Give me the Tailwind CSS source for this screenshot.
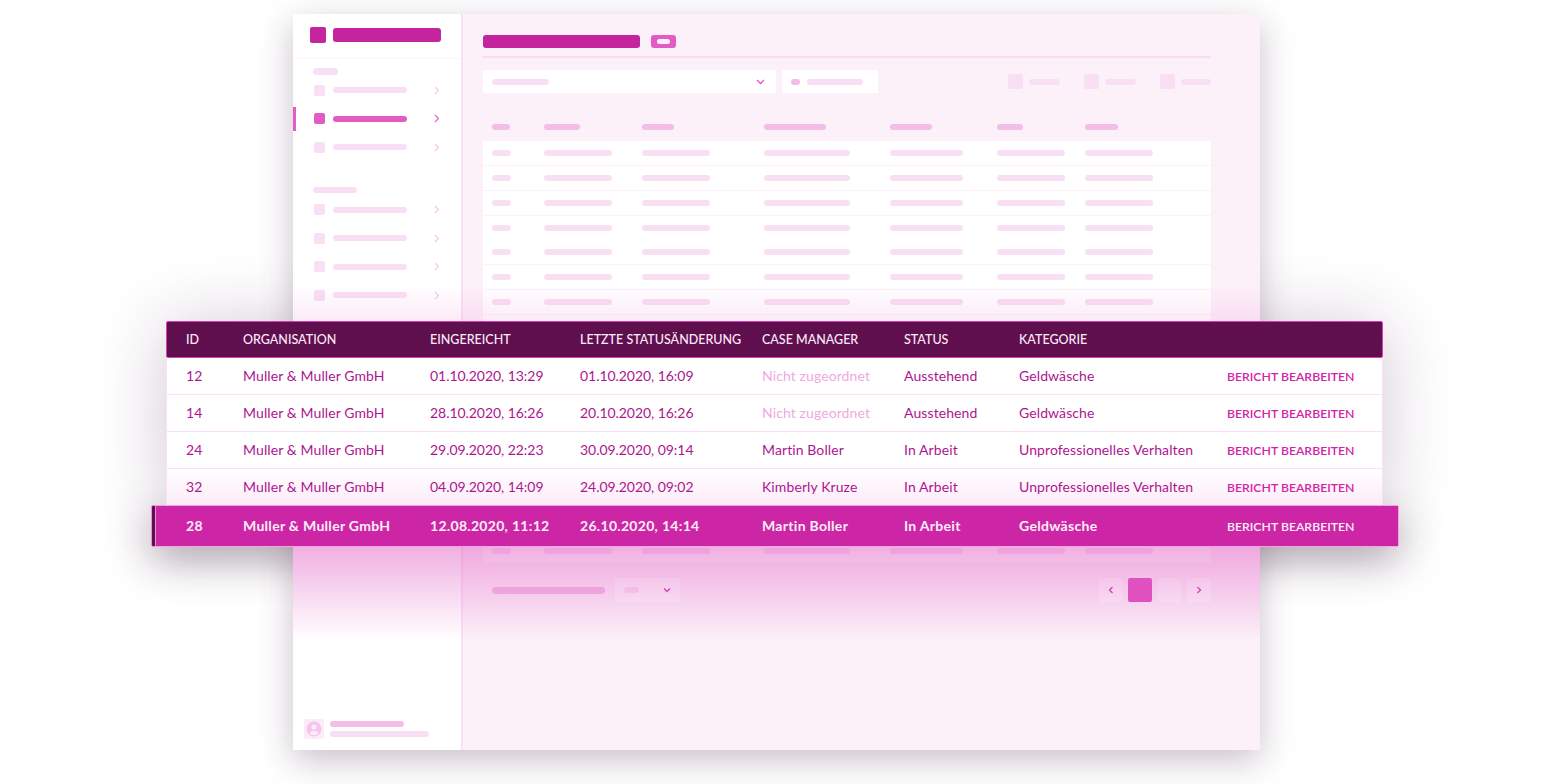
<!DOCTYPE html>
<html lang="de">
<head>
    <meta charset="UTF-8">
    <title>Fallübersicht</title>
    <script src="https://cdn.jsdelivr.net/npm/@tailwindcss/browser@4"></script>
</head>
<body class="bg-white font-['Lato','Open_Sans',sans-serif]">
<div class="relative w-[1549px] h-[784px] overflow-hidden bg-white pt-[14px] pl-[293px]">

    <!-- Shadow of the floating table: only shows outside the window -->
    <div class="absolute left-[166px] top-[321px] w-[1217px] h-[185px] shadow-[0_4px_70px_rgba(60,20,60,0.24)]"></div>
    <div class="absolute left-[151px] top-[506px] w-[1248px] h-[41px] shadow-[0_12px_44px_rgba(50,20,50,0.42)]"></div>

    <!-- App window behind the table -->
    <div class="relative flex w-[967px] h-[736px] bg-white shadow-[0_10px_32px_rgba(60,25,60,0.28)]">

        <!-- Sidebar -->
        <aside class="relative flex flex-col w-[168px] shrink-0 bg-white">
            <div class="flex items-center gap-[7px] h-[45px] pl-[17px] pb-[2px] border-b border-[#fdf4fb]">
                <div class="w-[16px] h-[16px] rounded-[2px] bg-[#c4259d]"></div>
                <div class="w-[108px] h-[14px] rounded-[3px] bg-[#c4259d]"></div>
            </div>
            <div id="nav-one" class="pt-[9px] pl-[20px]">
                <div class="w-[25px] h-[7px] rounded-full bg-[#f9dff4] mb-[1px]"></div>
            </div>
            <div id="nav-two" class="pt-[25px] pl-[20px]">
                <div class="w-[44px] h-[6px] rounded-full bg-[#f9dff4] mb-[3px]"></div>
            </div>
            <div class="absolute left-[11px] top-[705px] flex items-center gap-[6px]">
                <div class="flex items-center justify-center w-[20px] h-[20px] rounded-[2px] bg-[#fcecf9]">
                    <svg width="16" height="16" viewBox="0 0 16 16">
                        <circle cx="8" cy="8" r="7.5" fill="#f6c4ec"/>
                        <circle cx="8" cy="6" r="2.6" fill="#fcecf9"/>
                        <ellipse cx="8" cy="12" rx="4" ry="2" fill="#fcecf9"/>
                    </svg>
                </div>
                <div class="flex flex-col gap-[4px]">
                    <div class="w-[74px] h-[6px] rounded-full bg-[#f4bde8]"></div>
                    <div class="w-[99px] h-[6px] rounded-full bg-[#f9dff4]"></div>
                </div>
            </div>
        </aside>

        <!-- Main area -->
        <main class="w-[799px] bg-[#fcf0f9] border-l-2 border-[#fae0f4] pl-[20px] pr-[49px]">
            <div class="flex items-center gap-[11px] h-[44px] pt-[13px] pb-[1px] border-b-2 border-[#f9dcf3]">
                <div class="w-[157px] h-[13px] rounded-[3px] bg-[#c4259d]"></div>
                <div class="flex items-center justify-center w-[25px] h-[13px] rounded-[3px] bg-[#e25cc4]">
                    <div class="w-[13px] h-[5px] rounded-full bg-[#fdf0fa]"></div>
                </div>
            </div>

            <div class="flex items-start h-[24px] mt-[12px]">
                <div class="flex items-center justify-between w-[293px] h-[23px] bg-white pl-[9px] pr-[11px]">
                    <div class="w-[57px] h-[6px] rounded-full bg-[#f9dff4]"></div>
                    <svg width="9" height="6" viewBox="0 0 9 6" fill="none" stroke="#e25cc4" stroke-width="1.3"><path d="M1 1l3.500 3.500L8 1"/></svg>
                </div>
                <div class="flex items-center gap-[7px] w-[96px] h-[23px] ml-[6px] bg-white pl-[9px]">
                    <div class="w-[9px] h-[6px] rounded-full bg-[#f4bde8]"></div>
                    <div class="w-[56px] h-[6px] rounded-full bg-[#f9dff4]"></div>
                </div>
                <div class="flex items-center gap-[6px] h-[23px] ml-[130px]">
                    <div class="w-[15px] h-[15px] rounded-[2px] bg-[#f9dff4]"></div>
                    <div class="w-[31px] h-[6px] rounded-full bg-[#f9dff4]"></div>
                </div>
                <div class="flex items-center gap-[6px] h-[23px] ml-[24px]">
                    <div class="w-[15px] h-[15px] rounded-[2px] bg-[#f9dff4]"></div>
                    <div class="w-[31px] h-[6px] rounded-full bg-[#f9dff4]"></div>
                </div>
                <div class="flex items-center gap-[6px] h-[23px] ml-[24px]">
                    <div class="w-[15px] h-[15px] rounded-[2px] bg-[#f9dff4]"></div>
                    <div class="w-[30px] h-[6px] rounded-full bg-[#f9dff4]"></div>
                </div>
            </div>

            <!-- Skeleton table -->
            <div class="grid grid-cols-[52px_98px_122px_126px_107px_88px_1fr] items-center h-[47px] pt-[18px] pl-[9px]">
                <div class="w-[18px] h-[6px] rounded-full bg-[#f4bde8]"></div>
                <div class="w-[36px] h-[6px] rounded-full bg-[#f4bde8]"></div>
                <div class="w-[32px] h-[6px] rounded-full bg-[#f4bde8]"></div>
                <div class="w-[62px] h-[6px] rounded-full bg-[#f4bde8]"></div>
                <div class="w-[42px] h-[6px] rounded-full bg-[#f4bde8]"></div>
                <div class="w-[26px] h-[6px] rounded-full bg-[#f4bde8]"></div>
                <div class="w-[33px] h-[6px] rounded-full bg-[#f4bde8]"></div>
            </div>
            <div id="skeleton-rows" class="grid auto-rows-[24.85px]"></div>

            <!-- Pagination -->
            <div class="flex items-center h-[24px] mt-[15px] pl-[9px]">
                <div class="w-[113px] h-[7px] rounded-full bg-[#f4bde8]"></div>
                <div class="flex items-center justify-between w-[65px] h-[24px] ml-[10px] bg-white/60 pl-[9px] pr-[9px]">
                    <div class="w-[15px] h-[6px] rounded-full bg-[#f9dff4]"></div>
                    <svg width="8" height="6" viewBox="0 0 8 6" fill="none" stroke="#d42fae" stroke-width="1.3"><path d="M1 1.500l3 3 3-3"/></svg>
                </div>
                <div class="flex items-center justify-center w-[23px] h-[24px] ml-auto bg-white/60 rounded-[2px]">
                    <svg width="6" height="8" viewBox="0 0 6 8" fill="none" stroke="#d42fae" stroke-width="1.3"><path d="M4.500 1l-3 3 3 3"/></svg>
                </div>
                <div class="w-[24px] h-[24px] ml-[6px] bg-[#df4dbd] rounded-[2px]"></div>
                <div class="w-[23px] h-[24px] ml-[6px] bg-white/60 rounded-[2px]"></div>
                <div class="flex items-center justify-center w-[24px] h-[24px] ml-[6px] bg-white/60 rounded-[2px]">
                    <svg width="6" height="8" viewBox="0 0 6 8" fill="none" stroke="#d42fae" stroke-width="1.3"><path d="M1.500 1l3 3-3 3"/></svg>
                </div>
            </div>
        </main>

        <!-- Pink glow laid over the window -->
        <div class="absolute left-0 right-0 top-[271px] h-[355px] bg-[linear-gradient(to_bottom,rgba(226,92,196,0)_0%,rgba(226,92,196,0.12)_10%,rgba(226,92,196,0.5)_73%,rgba(226,92,196,0.28)_85%,rgba(226,92,196,0)_100%)]"></div>
    </div>

    <!-- Highlighted table floating over the window -->
    <div class="absolute left-[151px] top-[321px] w-[1248px]">
        <div class="ml-[15px] w-[1217px]">
            <div class="grid grid-cols-[57px_187px_150px_182px_142px_115px_208px_1fr] items-center h-[37px] px-[19px] pt-[2px] rounded-[2px] bg-[#600f4e] border border-[#d83fb4] text-[12.500px] font-medium text-[#fdeaf9]">
                <div>ID</div>
                <div>ORGANISATION</div>
                <div>EINGEREICHT</div>
                <div>LETZTE STATUSÄNDERUNG</div>
                <div>CASE MANAGER</div>
                <div>STATUS</div>
                <div>KATEGORIE</div>
                <div></div>
            </div>
            <div id="rows"></div>
        </div>
        <div class="relative flex h-[42px] -mt-[1px]">
            <div class="w-[5px] h-[42px] rounded-l-[2px] bg-[#600f4e] border border-[#e88fd6]"></div>
            <div class="grid grid-cols-[57px_187px_150px_182px_142px_115px_208px_1fr] items-center flex-1 pl-[30px] pb-[2px] rounded-r-[2px] bg-[#cc26a6] border border-[#f0a6e0] border-l-0 text-[14px] font-bold tracking-[0.3px] text-[#fdeef9]">
                <div>28</div>
                <div>Muller &amp; Muller GmbH</div>
                <div>12.08.2020, 11:12</div>
                <div>26.10.2020, 14:14</div>
                <div>Martin Boller</div>
                <div>In Arbeit</div>
                <div>Geldwäsche</div>
                <div class="pt-[4px] text-[12.250px] font-semibold tracking-normal whitespace-nowrap">BERICHT BEARBEITEN</div>
            </div>
        </div>
    </div>
</div>

<script>
    // Sidebar entries
    const chevron = color => `<svg width="6" height="9" viewBox="0 0 6 9" fill="none" stroke="${color}" stroke-width="1.1"><path d="M1 1l3.500 3.500L1 8"/></svg>`;

    const navItem = active => `
        <div class="relative flex items-center h-[28.500px] ml-[1px]">
            <div class="w-[11px] h-[11px] rounded-[2px] ${active ? 'bg-[#e25cc4]' : 'bg-[#f9dff4]'}"></div>
            <div class="w-[74px] h-[6px] ml-[8px] rounded-full ${active ? 'bg-[#e25cc4]' : 'bg-[#f9dff4]'}"></div>
            <div class="ml-[27px]">${chevron(active ? '#e25cc4' : '#f6c4ec')}</div>
            ${active ? '<div class="absolute -left-[21px] top-[2px] w-[3px] h-[24px] bg-[#e25cc4]"></div>' : ''}
        </div>`;

    document.getElementById('nav-one').insertAdjacentHTML('beforeend', [false, true, false].map(navItem).join(''));
    document.getElementById('nav-two').insertAdjacentHTML('beforeend', [false, false, false, false].map(navItem).join(''));

    // Placeholder rows of the blurred table
    const bar = w => `<div class="h-[6px] rounded-full bg-[#f9dff4]" style="width:${w}px"></div>`;
    const skeletonRow = `
        <div class="grid grid-cols-[52px_98px_122px_126px_107px_88px_1fr] items-center h-[24px] pl-[9px] bg-white">
            ${[19, 68, 68, 86, 73, 68, 68].map(bar).join('')}
        </div>`;
    document.getElementById('skeleton-rows').innerHTML = skeletonRow.repeat(17);

    // Real rows
    const reports = [
        ['12', '01.10.2020, 13:29', '01.10.2020, 16:09', 'Nicht zugeordnet', 'Ausstehend', 'Geldwäsche'],
        ['14', '28.10.2020, 16:26', '20.10.2020, 16:26', 'Nicht zugeordnet', 'Ausstehend', 'Geldwäsche'],
        ['24', '29.09.2020, 22:23', '30.09.2020, 09:14', 'Martin Boller', 'In Arbeit', 'Unprofessionelles Verhalten'],
        ['32', '04.09.2020, 14:09', '24.09.2020, 09:02', 'Kimberly Kruze', 'In Arbeit', 'Unprofessionelles Verhalten']
    ];

    document.getElementById('rows').innerHTML = reports.map((r, i) => `
        <div class="grid grid-cols-[57px_187px_150px_182px_142px_115px_208px_1fr] items-center h-[37px] px-[19px] pb-[2px] border border-t-0 border-[#fadff5] text-[14px] tracking-[0.1px] text-[#ad1590] ${i === 3 ? 'bg-[linear-gradient(to_bottom,#ffffff,#fcebf9)]' : 'bg-white'}">
            <div>${r[0]}</div>
            <div>Muller &amp; Muller GmbH</div>
            <div class="tracking-[-0.05px]">${r[1]}</div>
            <div class="tracking-[-0.05px]">${r[2]}</div>
            <div class="${r[3] === 'Nicht zugeordnet' ? 'text-[#eeaae0]' : ''}">${r[3]}</div>
            <div>${r[4]}</div>
            <div>${r[5]}</div>
            <div class="pt-[4px] text-[12.250px] font-semibold tracking-normal text-[#d024a8] whitespace-nowrap">BERICHT BEARBEITEN</div>
        </div>`).join('');
</script>
</body>
</html>
